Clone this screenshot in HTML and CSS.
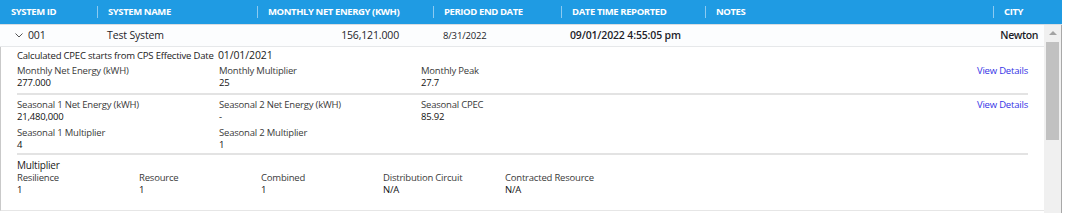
FILE: index.html
```html
<!DOCTYPE html>
<html lang="en">
<head>
    <meta charset="UTF-8">
    <meta name="viewport" content="width=device-width, initial-scale=1.0">
    <title>Systems</title>
    <link rel="stylesheet" href="styles.css">
</head>
<body>
    <div class="grid">
        <div class="grid-header">
            <div class="th">System ID</div>
            <div class="th">System Name</div>
            <div class="th">Monthly Net Energy (kWH)</div>
            <div class="th">Period End Date</div>
            <div class="th">Date Time Reported</div>
            <div class="th">Notes</div>
            <div class="th">City</div>
            <div class="th-spacer"></div>
        </div>

        <div class="grid-body">
            <div class="rows">
                <div class="row">
                    <div class="td id-cell">
                        <svg class="chevron" width="8" height="5" viewBox="0 0 8 5"><path d="M0.5 0.5 L4 4 L7.5 0.5" fill="none" stroke="#555" stroke-width="1"/></svg>
                        001
                    </div>
                    <div class="td">Test System</div>
                    <div class="td num">156,121.000</div>
                    <div class="td small">8/31/2022</div>
                    <div class="td strong">09/01/2022 4:55:05 pm</div>
                    <div class="td"></div>
                    <div class="td city">Newton</div>
                </div>

                <div class="detail">
                    <div class="calc">Calculated CPEC starts from CPS Effective Date <span class="calc-date">01/01/2021</span></div>

                    <div class="section monthly">
                        <div class="field">
                            <div class="label">Monthly Net Energy (kWH)</div>
                            <div class="value">277.000</div>
                        </div>
                        <div class="field">
                            <div class="label">Monthly Multiplier</div>
                            <div class="value">25</div>
                        </div>
                        <div class="field">
                            <div class="label">Monthly Peak</div>
                            <div class="value">27.7</div>
                        </div>
                        <a class="view-details" href="#">View Details</a>
                    </div>

                    <div class="section seasonal">
                        <div class="field">
                            <div class="label">Seasonal 1 Net Energy (kWH)</div>
                            <div class="value">21,480,000</div>
                        </div>
                        <div class="field">
                            <div class="label">Seasonal 2 Net Energy (kWH)</div>
                            <div class="value">-</div>
                        </div>
                        <div class="field">
                            <div class="label">Seasonal CPEC</div>
                            <div class="value">85.92</div>
                        </div>
                        <a class="view-details" href="#">View Details</a>
                        <div class="field">
                            <div class="label">Seasonal 1 Multiplier</div>
                            <div class="value">4</div>
                        </div>
                        <div class="field">
                            <div class="label">Seasonal 2 Multiplier</div>
                            <div class="value">1</div>
                        </div>
                    </div>

                    <div class="section multiplier">
                        <div class="section-title">Multiplier</div>
                        <div class="multi-grid">
                            <div class="field">
                                <div class="label">Resilience</div>
                                <div class="value">1</div>
                            </div>
                            <div class="field">
                                <div class="label">Resource</div>
                                <div class="value">1</div>
                            </div>
                            <div class="field">
                                <div class="label">Combined</div>
                                <div class="value">1</div>
                            </div>
                            <div class="field">
                                <div class="label">Distribution Circuit</div>
                                <div class="value">N/A</div>
                            </div>
                            <div class="field">
                                <div class="label">Contracted Resource</div>
                                <div class="value">N/A</div>
                            </div>
                        </div>
                    </div>
                </div>
            </div>

            <div class="scrollbar">
                <div class="scroll-up"></div>
                <div class="scroll-thumb"></div>
            </div>
        </div>
    </div>
</body>
</html>
```

FILE: styles.css
```css
body {
    margin: 0;
    padding: 0;
    background: #fff;
    font-family: 'Open Sans', 'Noto Sans', sans-serif;
    color: #222;
    overflow: hidden;
}
.grid {
    width: 1062px;
}
.grid-header {
    display: grid;
    grid-template-columns: 97px 160px 176px 128px 144px 288px 51px 18px;
    height: 24px;
    background-color: #1f9be3;
    border-bottom: 1px solid #d8dde2;
}
.th {
    position: relative;
    color: #fff;
    font-size: 9.5px;
    font-weight: 700;
    letter-spacing: -0.4px;
    text-transform: uppercase;
    line-height: 24px;
    padding-left: 11px;
    white-space: nowrap;
}
.th + .th::before {
    content: '';
    position: absolute;
    left: 0;
    top: 6px;
    height: 12px;
    border-left: 1px solid #8ccaf1;
}
.grid-body {
    display: flex;
    height: 188px;
}
.rows {
    width: 1044px;
}
.row {
    display: grid;
    grid-template-columns: 97px 160px 176px 128px 144px 288px 51px;
    height: 21px;
    background: #fcfdfe;
    border-bottom: 1px solid #e6e8ea;
    font-size: 10.5px;
    letter-spacing: -0.15px;
    line-height: 21px;
    color: #1e1e2a;
}
.td {
    padding-left: 10px;
    white-space: nowrap;
}
.id-cell {
    padding-left: 15px;
    display: flex;
    align-items: center;
    gap: 5px;
}
.chevron {
    display: block;
}
.num {
    text-align: right;
    padding-right: 34px;
}
.small {
    font-size: 9.5px;
}
.strong {
    font-weight: 600;
    padding-left: 9px;
}
.city {
    text-align: right;
    padding-left: 0;
    padding-right: 6px;
    font-weight: 600;
    letter-spacing: -0.4px;
}
.detail {
    border-left: 1px solid #c9c9c9;
    border-bottom: 1px solid #e6e6e6;
    padding: 1px 16px 15px 16px;
    font-size: 9.5px;
    letter-spacing: -0.2px;
    height: 147px;
}
.calc {
    line-height: 14px;
    color: #222;
}
.calc-date {
    font-size: 10.5px;
    letter-spacing: -0.1px;
    margin-left: 2px;
}
.section {
    border-bottom: 2px solid #e3e3e3;
}
.monthly,
.seasonal {
    display: grid;
    grid-template-columns: 202px 202px 1fr auto;
    row-gap: 4px;
}
.monthly {
    padding: 2px 0 4px;
}
.seasonal {
    padding: 4px 0 2px;
}
.multiplier {
    border-bottom: none;
    padding-top: 4px;
}
.label {
    line-height: 12px;
    color: #3a3a3a;
}
.value {
    line-height: 12px;
    color: #111;
}
.view-details {
    line-height: 12px;
    color: #3434e6;
    text-decoration: none;
    justify-self: end;
    align-self: start;
}
.section-title {
    line-height: 13px;
    font-size: 10px;
    color: #1a1a1a;
}
.multi-grid {
    display: grid;
    grid-template-columns: 122px 122px 122px 122px 1fr;
}
.scrollbar {
    position: relative;
    width: 17px;
    background: #f0f0f0;
    border-right: 1px solid #a8a8a8;
}
.scroll-up {
    position: absolute;
    left: 5px;
    top: 6px;
    width: 0;
    height: 0;
    border-left: 4px solid transparent;
    border-right: 4px solid transparent;
    border-bottom: 4px solid #a3a3a3;
}
.scroll-thumb {
    position: absolute;
    left: 2px;
    top: 17px;
    width: 13px;
    height: 98px;
    background: #c1c1c1;
}
```
